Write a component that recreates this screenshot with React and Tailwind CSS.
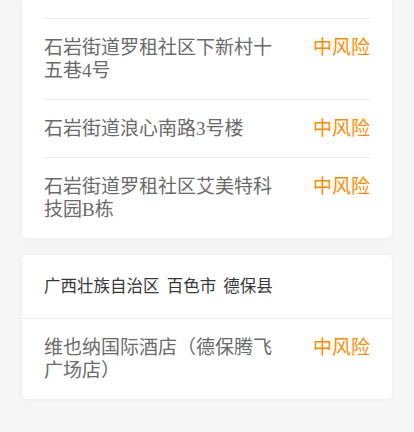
export default function App() {
  const font = { fontFamily: '"Liberation Serif", "Noto Sans CJK SC", serif' };
  const Row = ({ text, last }) => (
    <div className={`flex justify-between items-start py-[17px] ${last ? "" : "border-b border-[#ececec]"}`}>
      <div className="w-[232px] text-[19px] leading-[23px] text-[#6a6a6a]">{text}</div>
      <div className="text-[19px] leading-[23px] text-[#ff8c00] whitespace-nowrap">中风险</div>
    </div>
  );
  return (
    <div className="w-[414px] h-[432px] overflow-hidden bg-[#f6f6f6]" style={font}>
      <div className="mx-[22px] bg-white rounded-b-[5px] shadow-[0_1px_6px_rgba(0,0,0,0.04)]">
        <div className="mx-[22px] h-[19px] border-b border-[#ececec]"></div>
        <div className="mx-[22px]">
          <Row text="石岩街道罗租社区下新村十五巷4号" />
          <Row text="石岩街道浪心南路3号楼" />
          <Row text="石岩街道罗租社区艾美特科技园B栋" last />
        </div>
      </div>
      <div className="mx-[22px] mt-[17px] bg-white rounded-[5px] shadow-[0_1px_6px_rgba(0,0,0,0.04)]">
        <div className="px-[22px] py-[20px] text-[16.5px] leading-[23px] text-[#383838] border-b border-[#ececec] [word-spacing:3px]">
          广西壮族自治区 百色市 德保县
        </div>
        <div className="mx-[22px]">
          <Row text="维也纳国际酒店（德保腾飞广场店）" last />
        </div>
      </div>
    </div>
  );
}
